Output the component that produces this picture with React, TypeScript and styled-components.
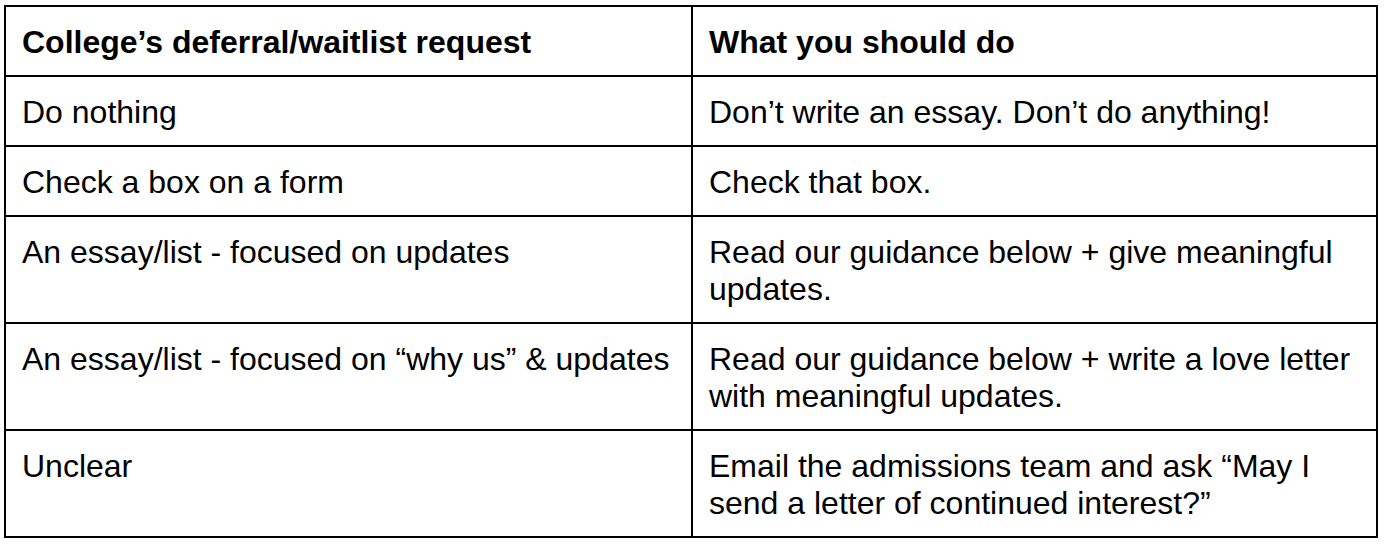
import React from "react";
import styled, { createGlobalStyle } from "styled-components";

const Global = createGlobalStyle`
  html, body {
    margin: 0;
    padding: 0;
    background: #ffffff;
  }
  body {
    font-family: "Liberation Sans", Arial, sans-serif;
    color: #000000;
  }
`;

const Page = styled.div`
  padding: 5px 0 0 4px;
`;

const Table = styled.table`
  border-collapse: collapse;
  table-layout: fixed;
  width: 1374px;
  font-family: "Liberation Sans", Arial, sans-serif;
  font-size: 32px;
  line-height: 37px;
  color: #000;
`;

const Cell = styled.td<{ $head?: boolean }>`
  border: 2px solid #000;
  padding: 17px 15px 14px 16px;
  vertical-align: top;
  text-align: left;
  font-weight: ${(p) => (p.$head ? 700 : 400)};
`;

const rows: [string, string][] = [
  ["Do nothing", "Don’t write an essay. Don’t do anything!"],
  ["Check a box on a form", "Check that box."],
  ["An essay/list - focused on updates", "Read our guidance below + give meaningful updates."],
  [
    "An essay/list - focused on “why us” & updates",
    "Read our guidance below + write a love letter with meaningful updates.",
  ],
  ["Unclear", "Email the admissions team and ask “May I send a letter of continued interest?”"],
];

export default function App() {
  return (
    <>
      <Global />
      <Page>
        <Table>
          <colgroup>
            <col style={{ width: 687 }} />
            <col style={{ width: 685 }} />
          </colgroup>
          <tbody>
            <tr>
              <Cell $head>College’s deferral/waitlist request</Cell>
              <Cell $head>What you should do</Cell>
            </tr>
            {rows.map(([a, b]) => (
              <tr key={a}>
                <Cell>{a}</Cell>
                <Cell>{b}</Cell>
              </tr>
            ))}
          </tbody>
        </Table>
      </Page>
    </>
  );
}
